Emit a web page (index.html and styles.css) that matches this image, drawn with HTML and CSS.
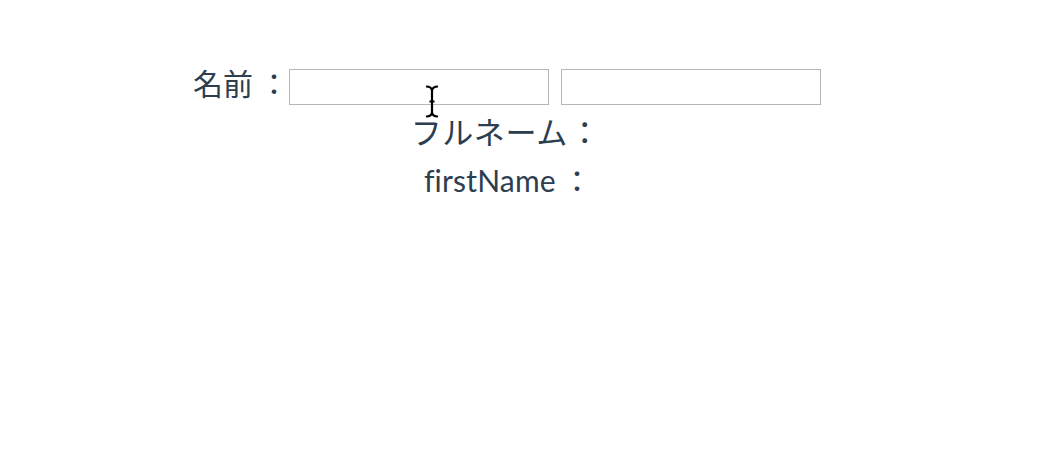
FILE: index.html
```html
<!DOCTYPE html>
<html lang="ja">
<head>
<meta charset="utf-8">
<title>名前</title>
<link rel="stylesheet" href="styles.css">
</head>
<body>
<div class="app">
  <div class="name-row">
    <label class="label">名前<span class="colon">：</span></label>
    <input class="field" type="text">
    <input class="field" type="text">
  </div>
  <p class="line line-kana">フルネーム<span class="colon">：</span></p>
  <p class="line line-latin">firstName<span class="colon">：</span></p>
</div>
<svg class="cursor" width="16" height="33" viewBox="0 0 16 33" aria-hidden="true">
  <path d="M2 1.5 C5.5 1.5 8 3 8 6 C8 3 10.5 1.5 14 1.5 M8 6 V27 M2 31.5 C5.5 31.5 8 30 8 27 C8 30 10.5 31.5 14 31.5 M5.5 16.5 H10.5" fill="none" stroke="#000" stroke-width="2.2"/>
</svg>
</body>
</html>
```
FILE: styles.css
```css
html, body {
  margin: 0;
  padding: 0;
  background: #fff;
}
body {
  position: relative;
  width: 1044px;
  height: 456px;
  overflow: hidden;
}
.app {
  padding: 69px 34px 0 0;
  display: flex;
  flex-direction: column;
  align-items: center;
  font-family: Lato, "Noto Sans CJK JP", sans-serif;
  font-size: 30px;
  color: #2c3e50;
}
.name-row {
  display: flex;
  align-items: center;
  height: 36px;
  padding-left: 4px;
}
.label {
  flex-shrink: 0;
  white-space: nowrap;
  margin-right: 6px;
  line-height: 36px;
  padding-bottom: 8px;
}
.colon {
  padding-left: 0.2em;
  margin-right: -0.2em;
}
.field {
  flex-shrink: 0;
  box-sizing: border-box;
  width: 260px;
  height: 36px;
  margin: 0;
  padding: 0 4px;
  border: 1px solid #b5b5b5;
  border-radius: 0;
  background: #fff;
  outline: none;
}
.field + .field {
  margin-left: 12px;
}
.line {
  margin: 0;
  height: 46px;
  line-height: 46px;
  white-space: nowrap;
}
.line-kana {
  margin-top: 4px;
  font-size: 31px;
  letter-spacing: 0.6px;
}
.line-kana .colon {
  padding-left: 0.05em;
  margin-right: -0.05em;
}
.line-latin {
  margin-top: 2px;
  letter-spacing: 0.2px;
}
.cursor {
  position: absolute;
  left: 424px;
  top: 85px;
}
```
